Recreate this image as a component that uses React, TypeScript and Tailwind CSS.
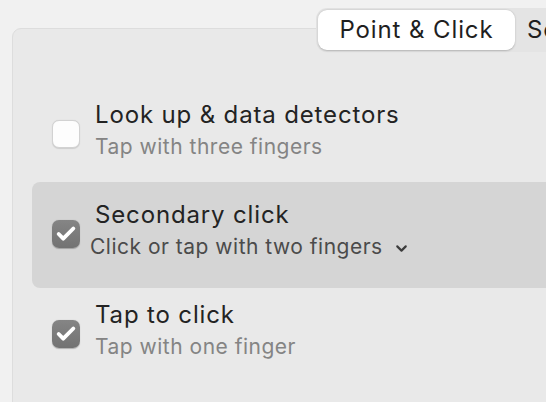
import { Check, ChevronDown } from "lucide-react";

type Row = {
  title: string;
  subtitle: string;
  checked: boolean;
  selected?: boolean;
  popup?: boolean;
};

const rows: Row[] = [
  { title: "Look up & data detectors", subtitle: "Tap with three fingers", checked: false },
  {
    title: "Secondary click",
    subtitle: "Click or tap with two fingers",
    checked: true,
    selected: true,
    popup: true,
  },
  { title: "Tap to click", subtitle: "Tap with one finger", checked: true },
];

function Checkbox({ checked }: { checked: boolean }) {
  if (checked) {
    return (
      <div className="w-[28px] h-[28px] rounded-[7px] bg-gradient-to-b from-[#858585] to-[#727272] flex items-center justify-center shadow-[0_0.5px_1px_rgba(0,0,0,0.25)]">
        <Check className="w-[22px] h-[22px] text-white" strokeWidth={4.2} />
      </div>
    );
  }
  return (
    <div className="w-[28px] h-[28px] rounded-[7px] bg-[#fdfdfd] border border-[#d2d2d2] shadow-[0_0.5px_1px_rgba(0,0,0,0.12)]" />
  );
}

export default function App() {
  return (
    <div className="w-[546px] h-[402px] overflow-hidden bg-[#f1f1f1] font-['Inter','Liberation_Sans',sans-serif]">
      <div className="relative z-10 flex pl-[316px] pt-[8px]">
        <div className="flex items-center h-[44px] w-[320px] shrink-0 rounded-[11px] bg-[#e4e4e4] p-[2px]">
          <div className="w-[197px] h-[40px] shrink-0 rounded-[9px] bg-white shadow-[0_0.5px_2px_rgba(0,0,0,0.22)] flex items-center justify-center text-[24px] tracking-[0.9px] text-[#1f1f1f]">
            Point &amp; Click
          </div>
          <div className="pl-[12px] text-[24px] tracking-[0.9px] text-[#1f1f1f] whitespace-nowrap">Scroll &amp; Zoom</div>
        </div>
      </div>

      <div className="-mt-[24px] ml-[12px] w-[620px] h-[420px] rounded-[9px] bg-[#e9e9e9] border border-[#dddddd] pt-[53px] px-[19px]">
        {rows.map((row, i) => (
          <div
            key={i}
            className={
              row.selected
                ? "flex items-start gap-[15px] pl-[20px] pt-[18px] h-[106px] rounded-[8px] bg-[#d5d5d5]"
                : i === 0
                ? "flex items-start gap-[15px] pl-[20px] pt-[18px] h-[100px]"
                : "flex items-start gap-[15px] pl-[20px] pt-[12px] h-[100px]"
            }
          >
            <div className="mt-[20px]">
              <Checkbox checked={row.checked} />
            </div>
            <div className="flex flex-col">
              <div className="text-[24px] leading-[30px] tracking-[0.85px] text-[#232323]">{row.title}</div>
              {row.popup ? (
                <div className="-ml-[5px] mt-[4px] flex items-center gap-[10px] text-[21px] leading-[26px] tracking-[0.5px] text-[#4b4b4b]">
                  <span>{row.subtitle}</span>
                  <ChevronDown className="w-[17px] h-[17px] text-[#3c3c3c] mt-[2px]" strokeWidth={3} />
                </div>
              ) : (
                <div className="mt-[4px] text-[21px] leading-[26px] tracking-[0.5px] text-[#848484]">{row.subtitle}</div>
              )}
            </div>
          </div>
        ))}
      </div>
    </div>
  );
}
